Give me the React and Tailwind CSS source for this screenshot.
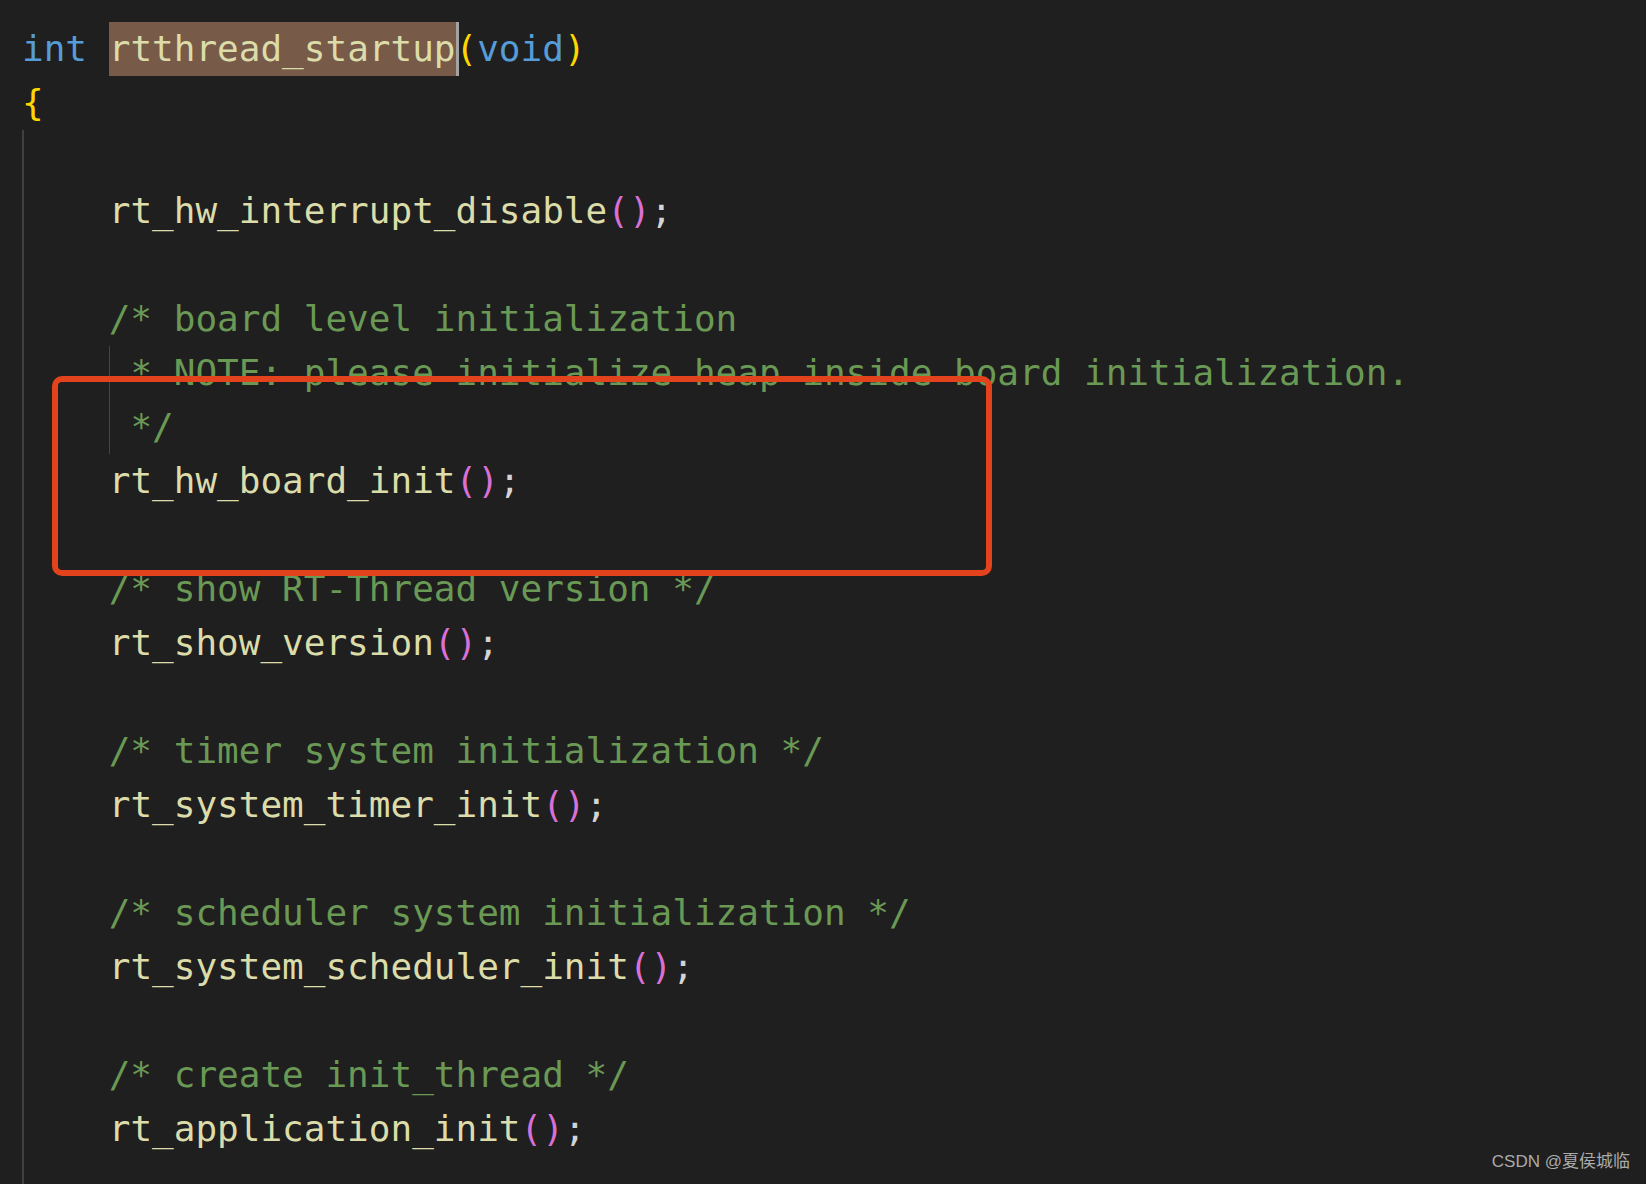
import React from "react"

const fn = "text-[#dcdcaa]"
const cm = "text-[#6a9955]"
const kw = "text-[#569cd6]"
const p1 = "text-[#ffd700]"
const p2 = "text-[#da70d6]"
const pu = "text-[#d4d4d4]"

function Call({ name }) {
    return (
        <>
            <span>{"    "}</span>
            <span className={fn}>{name}</span>
            <span className={p2}>()</span>
            <span className={pu}>;</span>
        </>
    )
}

function Line({ children }) {
    return <div className="h-[54px] whitespace-pre">{children}</div>
}

export default function App() {
    return (
        <div className="relative h-[1184px] w-[1646px] overflow-hidden bg-[#1f1f1f] pt-[22px] pl-[22px] font-['DejaVu_Sans_Mono',monospace] text-[36px] leading-[54px]">
            <Line>
                <span className={kw}>int</span>
                <span> </span>
                <span className="inline-block h-[54px] align-top bg-[#775a48] text-[#dcdcaa] shadow-[3px_0_0_#a3a3a3]">rtthread_startup</span>
                <span className={p1}>(</span>
                <span className={kw}>void</span>
                <span className={p1}>)</span>
            </Line>
            <Line>
                <span className={p1}>{"{"}</span>
            </Line>

            <div className="shadow-[inset_2px_0_0_#404040]">
                <Line> </Line>
                <Line>
                    <Call name="rt_hw_interrupt_disable" />
                </Line>
                <Line> </Line>
                <Line>
                    <span className={cm}>{"    /* board level initialization"}</span>
                </Line>
                <div className="h-[54px] flex whitespace-pre">
                    <span>{"    "}</span>
                    <span className={`${cm} shadow-[inset_1px_0_0_#454545]`}>
                        {" * NOTE: please initialize heap inside board initialization."}
                    </span>
                </div>
                <div className="h-[54px] flex whitespace-pre">
                    <span>{"    "}</span>
                    <span className={`${cm} shadow-[inset_1px_0_0_#454545]`}>{" */"}</span>
                </div>
                <Line>
                    <Call name="rt_hw_board_init" />
                </Line>
                <Line> </Line>
                <Line>
                    <span className={cm}>{"    /* show RT-Thread version */"}</span>
                </Line>
                <Line>
                    <Call name="rt_show_version" />
                </Line>
                <Line> </Line>
                <Line>
                    <span className={cm}>{"    /* timer system initialization */"}</span>
                </Line>
                <Line>
                    <Call name="rt_system_timer_init" />
                </Line>
                <Line> </Line>
                <Line>
                    <span className={cm}>{"    /* scheduler system initialization */"}</span>
                </Line>
                <Line>
                    <Call name="rt_system_scheduler_init" />
                </Line>
                <Line> </Line>
                <Line>
                    <span className={cm}>{"    /* create init_thread */"}</span>
                </Line>
                <Line>
                    <Call name="rt_application_init" />
                </Line>
                <Line> </Line>
            </div>

            {/* red annotation box */}
            <div className="absolute left-[52px] top-[376px] h-[200px] w-[940px] rounded-[10px] border-[6px] border-[#e2431c]" />

            <div className="absolute right-[16px] bottom-[12px] font-['Liberation_Sans','Noto_Sans_CJK_SC',sans-serif] text-[17px] leading-[20px] text-[#ababab]">
                CSDN @夏侯城临
            </div>
        </div>
    )
}
